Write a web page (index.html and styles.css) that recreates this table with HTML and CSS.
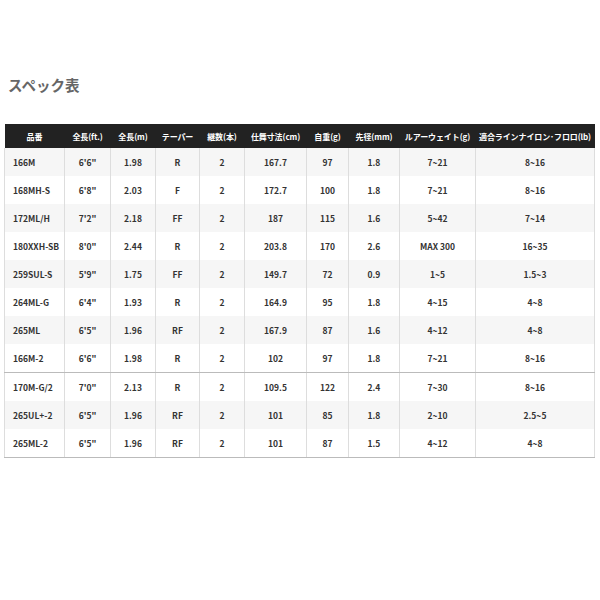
FILE: index.html
```html
<!DOCTYPE html>
<html lang="ja">
<head>
<meta charset="utf-8">
<link rel="stylesheet" href="styles.css">
</head>
<body>
<div class="page">
  <h2 class="title">スペック表</h2>
  <table class="spec">
    <colgroup>
      <col class="c1"><col class="c2"><col class="c3"><col class="c4"><col class="c5">
      <col class="c6"><col class="c7"><col class="c8"><col class="c9"><col class="c10">
    </colgroup>
    <thead>
      <tr><th>品番</th><th>全長(ft.)</th><th>全長(m)</th><th>テーパー</th><th>継数(本)</th><th>仕舞寸法(cm)</th><th>自重(g)</th><th>先径(mm)</th><th>ルアーウェイト(g)</th><th>適合ラインナイロン･フロロ(lb)</th></tr>
    </thead>
    <tbody>
      <tr class="g"><td class="name">166M</td><td>6'6"</td><td>1.98</td><td>R</td><td>2</td><td>167.7</td><td>97</td><td>1.8</td><td>7~21</td><td>8~16</td></tr>
      <tr><td class="name">168MH-S</td><td>6'8"</td><td>2.03</td><td>F</td><td>2</td><td>172.7</td><td>100</td><td>1.8</td><td>7~21</td><td>8~16</td></tr>
      <tr class="g"><td class="name">172ML/H</td><td>7'2"</td><td>2.18</td><td>FF</td><td>2</td><td>187</td><td>115</td><td>1.6</td><td>5~42</td><td>7~14</td></tr>
      <tr><td class="name">180XXH-SB</td><td>8'0"</td><td>2.44</td><td>R</td><td>2</td><td>203.8</td><td>170</td><td>2.6</td><td>MAX 300</td><td>16~35</td></tr>
      <tr class="g"><td class="name">259SUL-S</td><td>5'9"</td><td>1.75</td><td>FF</td><td>2</td><td>149.7</td><td>72</td><td>0.9</td><td>1~5</td><td>1.5~3</td></tr>
      <tr><td class="name">264ML-G</td><td>6'4"</td><td>1.93</td><td>R</td><td>2</td><td>164.9</td><td>95</td><td>1.8</td><td>4~15</td><td>4~8</td></tr>
      <tr class="g"><td class="name">265ML</td><td>6'5"</td><td>1.96</td><td>RF</td><td>2</td><td>167.9</td><td>87</td><td>1.6</td><td>4~12</td><td>4~8</td></tr>
      <tr class="sep"><td class="name">166M-2</td><td>6'6"</td><td>1.98</td><td>R</td><td>2</td><td>102</td><td>97</td><td>1.8</td><td>7~21</td><td>8~16</td></tr>
      <tr><td class="name">170M-G/2</td><td>7'0"</td><td>2.13</td><td>R</td><td>2</td><td>109.5</td><td>122</td><td>2.4</td><td>7~30</td><td>8~16</td></tr>
      <tr class="g"><td class="name">265UL+-2</td><td>6'5"</td><td>1.96</td><td>RF</td><td>2</td><td>101</td><td>85</td><td>1.8</td><td>2~10</td><td>2.5~5</td></tr>
      <tr><td class="name">265ML-2</td><td>6'5"</td><td>1.96</td><td>RF</td><td>2</td><td>101</td><td>87</td><td>1.5</td><td>4~12</td><td>4~8</td></tr>
    </tbody>
  </table>
</div>
</body>
</html>
```
FILE: styles.css
```css
html, body {
  margin: 0;
  padding: 0;
  background: #fff;
}
body {
  font-family: "Noto Sans CJK JP", "Noto Sans", sans-serif;
  color: #333;
}
.page {
  width: 600px;
  height: 600px;
  padding: 73px 4px 0 4px;
  box-sizing: border-box;
}
.title {
  margin: 0 0 27px 4px;
  font-size: 14.5px;
  line-height: 24px;
  font-weight: 700;
  color: #666;
}
.spec {
  width: 590px;
  table-layout: fixed;
  border-collapse: collapse;
  font-size: 8.5px;
  font-weight: 700;
}
.c1 { width: 60px; }
.c2 { width: 46px; }
.c3 { width: 45px; }
.c4 { width: 44px; }
.c5 { width: 45px; }
.c6 { width: 62px; }
.c7 { width: 42px; }
.c8 { width: 51px; }
.c9 { width: 76px; }
.c10 { width: 119px; }
.spec th {
  background: #222;
  color: #fff;
  height: 24px;
  padding: 0;
  font-size: 8px;
  font-weight: 700;
  text-align: center;
  white-space: nowrap;
  letter-spacing: -0.1px;
}
.spec td {
  height: 28px;
  padding: 0;
  text-align: center;
  border-left: 1px solid #ddd;
  border-right: 1px solid #ddd;
  color: #333;
}
.spec td.name {
  text-align: left;
  padding-left: 8px;
}
.spec tr.g td {
  background: #f6f6f6;
}
.spec tr.sep td {
  border-bottom: 1px solid #bbb;
}
.spec tbody tr:last-child td {
  border-bottom: 1px solid #bbb;
}
```
